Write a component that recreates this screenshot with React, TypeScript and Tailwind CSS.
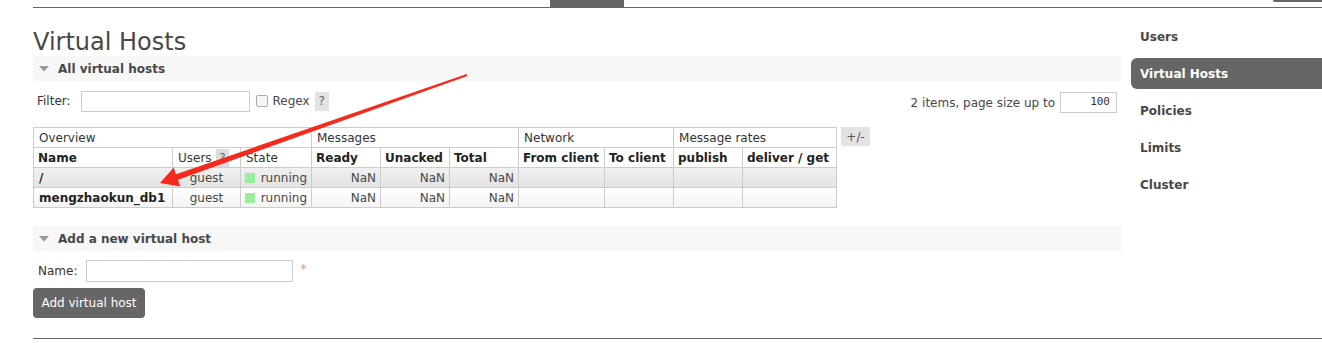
import React from "react";

const cols = [139, 68, 71, 69, 69, 69, 86, 69, 69, 94];

function Row({ name, alt }: { name: string; alt: boolean }) {
  const bg = alt
    ? "bg-[linear-gradient(#f0f0f0,#e3e3e3)]"
    : "bg-[linear-gradient(#ffffff,#f3f3f3)]";
  return (
    <tr className={`h-[20px] ${bg}`}>
      <td className="border border-[#cccccc] px-[5px] font-bold text-[#222] whitespace-nowrap overflow-hidden">{name}</td>
      <td className="border border-[#cccccc] px-[4px] text-center">guest</td>
      <td className="border border-[#cccccc] px-[4px]">
        <div className="flex items-center gap-[6px]">
          <span className="inline-block w-[10px] h-[10px] bg-[#99ee99]" />
          <span>running</span>
        </div>
      </td>
      <td className="border border-[#cccccc] px-[4px] text-right">NaN</td>
      <td className="border border-[#cccccc] px-[4px] text-right">NaN</td>
      <td className="border border-[#cccccc] px-[4px] text-right">NaN</td>
      <td className="border border-[#cccccc]" />
      <td className="border border-[#cccccc]" />
      <td className="border border-[#cccccc]" />
      <td className="border border-[#cccccc]" />
    </tr>
  );
}

function SectionBar({ title }: { title: string }) {
  return (
    <div className="h-[25px] bg-[#f7f7f7] flex items-center pl-[6px]">
      <svg width="10" height="6" viewBox="0 0 10 6" className="mr-[9px] mt-[1px]">
        <polygon points="0,0 10,0 5,5.5" fill="#999999" />
      </svg>
      <span className="font-bold text-[12px] text-[#484848]">{title}</span>
    </div>
  );
}

export default function App() {
  const th = "border border-[#cccccc] px-[4px] text-left font-bold text-[#222] whitespace-nowrap overflow-hidden";
  const gh = "border border-[#cccccc] px-[5px] text-left font-normal text-[#333] whitespace-nowrap";
  return (
    <div className="relative w-[1322px] h-[343px] bg-white overflow-hidden font-['DejaVu_Sans',Verdana,sans-serif] text-[12px] text-[#484848]">
      {/* top bar */}
      <div className="ml-[33px] h-[8px] border-b border-[#666666] flex items-start">
        <div className="w-[517px]" />
        <div className="w-[74px] h-[7px] bg-[#666666]" />
        <div className="flex-1" />
        <div className="w-[49px] h-[2px] bg-[#666666] rounded-bl-[3px]" />
      </div>

      <div className="flex">
        {/* main */}
        <div className="ml-[33px] w-[1088px]">
          <h1 className="mt-[20px] mb-0 text-[24px] leading-[28px] text-[#484848] font-normal">
            Virtual Hosts
          </h1>
          <SectionBar title="All virtual hosts" />

          <div className="mt-[8px] flex items-center justify-between">
            <div className="flex items-center">
              <span className="ml-[4px] text-[#333]">Filter:</span>
              <div className="ml-[10px] w-[169px] h-[21px] border border-[#cccccc] bg-white" />
              <span className="ml-[6px] w-[12px] h-[12px] border border-[#aaaaaa] rounded-[2px] bg-[#f6f6f6]" />
              <span className="ml-[5px]">Regex</span>
              <span className="ml-[5px] w-[14px] h-[19px] bg-[#e3e3e3] flex items-center justify-center text-[#666]">?</span>
            </div>
            <div className="flex items-center mt-[3px] mr-[4px]">
              <span>2 items, page size up to</span>
              <div className="ml-[5px] w-[57px] h-[21px] border border-[#cccccc] flex items-center justify-end pr-[6px] font-['DejaVu_Sans_Mono',monospace] text-[11px] text-[#333]">
                100
              </div>
            </div>
          </div>

          <div className="mt-[14px] flex items-start">
            <table className="table-fixed border-collapse w-[804px] leading-[18px]">
              <colgroup>
                {cols.map((w, i) => (
                  <col key={i} style={{ width: w }} />
                ))}
              </colgroup>
              <thead>
                <tr className="h-[20px] bg-white">
                  <th colSpan={3} className={gh}>Overview</th>
                  <th colSpan={3} className={gh}>Messages</th>
                  <th colSpan={2} className={gh}>Network</th>
                  <th colSpan={2} className={gh}>Message rates</th>
                </tr>
                <tr className="h-[20px] bg-white">
                  <th className={th}>Name</th>
                  <th className="border border-[#cccccc] pl-[5px] pr-0 text-left font-normal text-[#333]">
                    <div className="flex items-center justify-between">
                      <span>Users</span>
                      <span className="w-[13px] h-[18px] bg-[#dddddd] mr-[11px] flex items-center justify-center text-[#666]">?</span>
                    </div>
                  </th>
                  <th className={gh}>State</th>
                  <th className={th}>Ready</th>
                  <th className={th}>Unacked</th>
                  <th className={th}>Total</th>
                  <th className={th}>From client</th>
                  <th className={th}>To client</th>
                  <th className={th}>publish</th>
                  <th className={th}>deliver / get</th>
                </tr>
              </thead>
              <tbody>
                <Row name="/" alt={true} />
                <Row name="mengzhaokun_db1" alt={false} />
              </tbody>
            </table>
            <div className="ml-[4px] w-[29px] h-[19px] bg-[#e3e3e3] flex items-center justify-center text-[#555]">
              +/-
            </div>
          </div>

          <div className="mt-[18px]">
            <SectionBar title="Add a new virtual host" />
          </div>

          <div className="mt-[9px] flex items-center">
            <span className="ml-[5px] text-[#333]">Name:</span>
            <div className="ml-[9px] w-[207px] h-[22px] border border-[#cccccc] bg-white" />
            <span className="ml-[7px] mb-[4px] text-[#ff8888] text-[12px]">*</span>
          </div>

          <button className="mt-[6px] h-[30px] w-[112px] rounded-[4px] bg-[#666666] text-white text-[12px] flex items-center justify-center">
            Add virtual host
          </button>
        </div>

        {/* nav */}
        <div className="ml-[10px] flex-1 mt-[13px] flex flex-col gap-[6px] font-bold text-[12px]">
          {["Users", "Virtual Hosts", "Policies", "Limits", "Cluster"].map((t) => (
            <div
              key={t}
              className={
                t === "Virtual Hosts"
                  ? "h-[31px] flex items-center pl-[9px] bg-[#666666] text-white rounded-l-[6px]"
                  : "h-[31px] flex items-center pl-[9px] text-[#484848]"
              }
            >
              {t}
            </div>
          ))}
        </div>
      </div>

      {/* bottom line */}
      <div className="absolute left-[33px] right-0 top-[338px] h-[1px] bg-[#666666]" />

      {/* red annotation arrow */}
      <svg className="absolute left-0 top-0 pointer-events-none" width="1322" height="343">
        <polygon
          points="467.3,76 178,179.8 180.3,186.4 160,183 173.7,167.6 176,174.2 466.7,74"
          fill="#f42a1e"
        />
      </svg>
    </div>
  );
}
